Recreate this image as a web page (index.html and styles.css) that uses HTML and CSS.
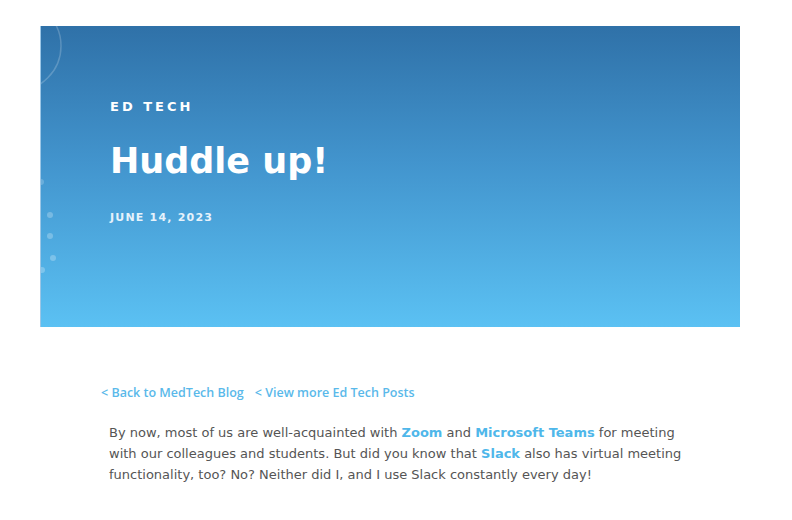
FILE: index.html
```html
<!DOCTYPE html>
<html>
<head>
<meta charset="utf-8">
<link rel="stylesheet" href="styles.css">
</head>
<body>
<div class="page">
  <header class="hero">
    <svg class="deco" width="60" height="301" viewBox="0 0 60 301">
      <circle cx="-25" cy="20" r="45" fill="none" stroke="rgba(255,255,255,0.2)" stroke-width="1.5"/>
      <circle cx="9" cy="189" r="3" fill="rgba(255,255,255,0.25)"/>
      <circle cx="9" cy="210" r="3" fill="rgba(255,255,255,0.25)"/>
      <circle cx="12" cy="232" r="3" fill="rgba(255,255,255,0.25)"/>
      <circle cx="1" cy="244" r="3" fill="rgba(255,255,255,0.25)"/>
      <circle cx="0" cy="156" r="3" fill="rgba(255,255,255,0.2)"/>
    </svg>
    <div class="hero-text">
      <p class="kicker">ED TECH</p>
      <h1 class="title">Huddle up!</h1>
      <p class="date">JUNE 14, 2023</p>
    </div>
  </header>
  <nav class="crumbs">
    <a href="#">&lt; Back to MedTech Blog</a>
    <a href="#">&lt; View more Ed Tech Posts</a>
  </nav>
  <p class="body-text">By now, most of us are well-acquainted with <a href="#">Zoom</a> and <a href="#">Microsoft Teams</a> for meeting with our colleagues and students. But did you know that <a href="#">Slack</a> also has virtual meeting functionality, too? No? Neither did I, and I use Slack constantly every day!</p>
</div>
</body>
</html>
```
FILE: styles.css
```css
html, body {
  margin: 0;
  padding: 0;
  background: #ffffff;
}
body {
  font-family: "DejaVu Sans", "Open Sans", sans-serif;
}
.page {
  padding: 26px 0 0 40px;
  width: 700px;
}
.hero {
  position: relative;
  height: 301px;
  background: linear-gradient(180deg, #2f71a8 0%, #4294cd 45%, #5bc1f3 100%);
  border-left: 1px solid #9cc6e6;
  box-sizing: border-box;
  overflow: hidden;
}
.deco {
  position: absolute;
  left: 0;
  top: 0;
}
.hero-text {
  padding: 73px 0 0 69px;
  color: #ffffff;
}
.kicker {
  margin: 0;
  font-size: 13px;
  font-weight: bold;
  letter-spacing: 3px;
  line-height: 16px;
}
.title {
  margin: 24px 0 0 0;
  font-size: 35px;
  font-weight: bold;
  line-height: 44px;
  letter-spacing: 0px;
}
.date {
  margin: 28px 0 0 0;
  font-size: 11px;
  font-weight: bold;
  letter-spacing: 1.2px;
  line-height: 14px;
  color: #e6f2fb;
}
.crumbs {
  display: flex;
  gap: 11px;
  margin: 58px 0 0 61px;
  font-family: "Open Sans", "DejaVu Sans", sans-serif;
  font-size: 12.5px;
  line-height: 16px;
}
.crumbs a {
  color: #5ab9ea;
  text-decoration: none;
  font-weight: 600;
}
.body-text {
  margin: 21px 0 0 69px;
  width: 590px;
  font-size: 13px;
  line-height: 21px;
  color: #555555;
}
.body-text a {
  color: #4fb7ea;
  text-decoration: none;
  font-weight: 600;
}
```
